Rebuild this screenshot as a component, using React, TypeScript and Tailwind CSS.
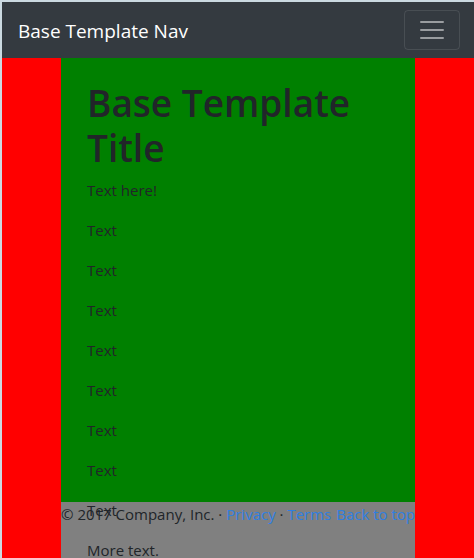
import React from "react";

export default function App() {
  const texts = Array.from({ length: 8 });
  return (
    <div
      className="h-[558px] overflow-hidden border-l-2 border-t-2 border-[#cbd9e1] bg-[#ff0000] flex flex-col"
      style={{ fontFamily: '"Open Sans", "Noto Sans", sans-serif' }}
    >
      <nav className="h-[56px] shrink-0 bg-[#343a40] flex items-center justify-between pl-4 pr-[14px]">
        <span className="text-[19px] text-white leading-[30px] pt-[2px]">Base Template Nav</span>
        <button className="w-[56px] h-[40px] rounded-[4px] border border-white/10 flex items-center justify-center">
          <svg width="30" height="30" viewBox="0 0 30 30">
            <path
              d="M4 7h22M4 15h22M4 23h22"
              stroke="rgba(255,255,255,0.5)"
              strokeWidth="2"
              strokeLinecap="round"
            />
          </svg>
        </button>
      </nav>
      <div className="flex-1 flex">
        <div className="w-[59px] shrink-0" />
        <div className="relative w-[354px] shrink-0 bg-[#808080]">
          <div className="h-[444px] bg-[#008000] pl-[26px] pt-[22px] text-[#212529]">
            <h1 className="text-[37px] font-semibold leading-[45px] mb-[8px]">Base Template Title</h1>
            <p className="text-[15px] leading-[24px] mb-4">Text here!</p>
            {texts.map((_, i) => (
              <p key={i} className="text-[15px] leading-[24px] mb-4">Text</p>
            ))}
            <p className="text-[15px] leading-[24px] mb-4">More text.</p>
          </div>
          <footer className="absolute left-0 right-0 top-[444px] flex justify-between whitespace-nowrap text-[15px] leading-[24px] text-[#212529]">
            <span>
              © 2017 Company, Inc. · <span className="text-[#2f7fe0]">Privacy</span> ·{" "}
              <span className="text-[#2f7fe0]">Terms</span>
            </span>
            <span className="text-[#2f7fe0]">Back to top</span>
          </footer>
        </div>
        <div className="flex-1" />
      </div>
    </div>
  );
}
